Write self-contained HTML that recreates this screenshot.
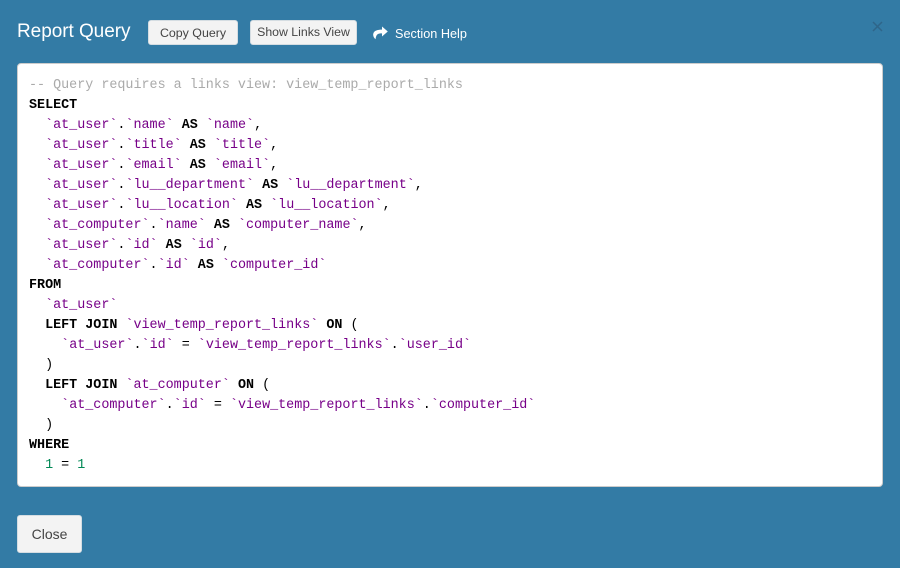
<!DOCTYPE html>
<html>
<head>
<meta charset="utf-8">
<title>Report Query</title>
<style>
html,body{margin:0;padding:0;}
body{width:900px;height:568px;overflow:hidden;background:#337ba5;position:relative;font-family:"Liberation Sans",sans-serif;}
.t{position:absolute;white-space:nowrap;}
.btn{position:absolute;box-sizing:border-box;background:#f3f3f3;border:1px solid #d5dde2;border-radius:3px;color:#444;text-align:center;white-space:nowrap;}
.panel{position:absolute;left:17px;top:63px;width:866px;height:424px;box-sizing:border-box;background:#fff;border:1px solid #ccc;border-radius:4px;}
pre{position:absolute;left:29px;top:76px;margin:0;font-family:"Liberation Mono",monospace;font-size:13.4px;line-height:20px;color:#000;}
b{font-weight:bold;color:#000;}
i{font-style:normal;color:#708;}
u{text-decoration:none;color:#085;}
em{font-style:normal;color:#aaa;}
</style>
</head>
<body>
<div class="t" style="left:17px;top:20px;font-size:19px;letter-spacing:-0.05px;line-height:24px;color:#fff;">Report Query</div>
<div class="btn" style="left:148px;top:20px;width:90px;height:25px;font-size:12.4px;line-height:24px;">Copy Query</div>
<div class="btn" style="left:250px;top:20px;width:107px;height:25px;font-size:12.3px;line-height:23px;">Show Links View</div>
<svg style="position:absolute;left:373px;top:26px;" width="15" height="14" viewBox="0 0 15 14"><path d="M9 0.5L14.8 5.5L9 10.5V7.4C5.5 7.3 3 8 2.6 13.2C0.8 11.8 0 9.8 0.2 8.2C0.6 4.6 4.5 3.6 9 3.6Z" fill="#fff"/></svg>
<div class="t" style="left:395px;top:26px;font-size:12.7px;line-height:16px;color:#fff;">Section Help</div>
<svg style="position:absolute;left:872px;top:21px;" width="11" height="11" viewBox="0 0 11 11"><path d="M1 1L10 10M10 1L1 10" stroke="#2f6589" stroke-width="1.5" fill="none"/></svg>
<div class="panel"></div>
<pre><em>-- Query requires a links view: view_temp_report_links</em>
<b>SELECT</b>
  <i>`at_user`</i>.<i>`name`</i> <b>AS</b> <i>`name`</i>,
  <i>`at_user`</i>.<i>`title`</i> <b>AS</b> <i>`title`</i>,
  <i>`at_user`</i>.<i>`email`</i> <b>AS</b> <i>`email`</i>,
  <i>`at_user`</i>.<i>`lu__department`</i> <b>AS</b> <i>`lu__department`</i>,
  <i>`at_user`</i>.<i>`lu__location`</i> <b>AS</b> <i>`lu__location`</i>,
  <i>`at_computer`</i>.<i>`name`</i> <b>AS</b> <i>`computer_name`</i>,
  <i>`at_user`</i>.<i>`id`</i> <b>AS</b> <i>`id`</i>,
  <i>`at_computer`</i>.<i>`id`</i> <b>AS</b> <i>`computer_id`</i>
<b>FROM</b>
  <i>`at_user`</i>
  <b>LEFT JOIN</b> <i>`view_temp_report_links`</i> <b>ON</b> (
    <i>`at_user`</i>.<i>`id`</i> = <i>`view_temp_report_links`</i>.<i>`user_id`</i>
  )
  <b>LEFT JOIN</b> <i>`at_computer`</i> <b>ON</b> (
    <i>`at_computer`</i>.<i>`id`</i> = <i>`view_temp_report_links`</i>.<i>`computer_id`</i>
  )
<b>WHERE</b>
  <u>1</u> = <u>1</u></pre>
<div class="btn" style="left:17px;top:515px;width:65px;height:38px;font-size:14px;line-height:37px;">Close</div>
</body>
</html>
